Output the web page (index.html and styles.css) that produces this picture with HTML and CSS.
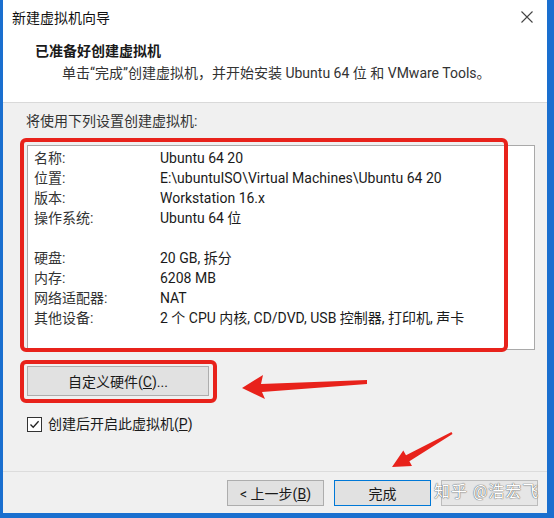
FILE: index.html
```html
<!DOCTYPE html>
<html lang="zh-CN">
<head>
    <meta charset="UTF-8">
    <title>新建虚拟机向导</title>
    <link rel="stylesheet" href="styles.css">
</head>
<body>
    <div class="window">
        <div class="header">
            <div class="titlebar">
                <span class="title">新建虚拟机向导</span>
                <span class="close">
                    <svg width="12" height="12" viewBox="0 0 12 12"><path d="M0.5 0.5 L11.5 11.5 M11.5 0.5 L0.5 11.5" stroke="#444" stroke-width="1.1" fill="none"/></svg>
                </span>
            </div>
            <div class="heading">已准备好创建虚拟机</div>
            <div class="subtitle">单击“完成”创建虚拟机，并开始安装 Ubuntu 64 位 和 VMware Tools。</div>
        </div>

        <div class="content">
            <div class="intro">将使用下列设置创建虚拟机:</div>
            <div class="listbox">
                <div class="row"><span class="key">名称:</span><span>Ubuntu 64 20</span></div>
                <div class="row"><span class="key">位置:</span><span>E:\ubuntuISO\Virtual Machines\Ubuntu 64 20</span></div>
                <div class="row"><span class="key">版本:</span><span>Workstation 16.x</span></div>
                <div class="row"><span class="key">操作系统:</span><span>Ubuntu 64 位</span></div>
                <div class="row blank"></div>
                <div class="row"><span class="key">硬盘:</span><span>20 GB, 拆分</span></div>
                <div class="row"><span class="key">内存:</span><span>6208 MB</span></div>
                <div class="row"><span class="key">网络适配器:</span><span>NAT</span></div>
                <div class="row"><span class="key">其他设备:</span><span>2 个 CPU 内核, CD/DVD, USB 控制器, 打印机, 声卡</span></div>
            </div>
            <button type="button" class="btn btn-custom">自定义硬件(<u>C</u>)...</button>
            <label class="check">
                <span class="box">
                    <svg width="11" height="11" viewBox="0 0 11 11"><path d="M1.5 5.5 L4.2 8.3 L9.6 2.2" stroke="#222" stroke-width="1.3" fill="none"/></svg>
                </span>
                <span>创建后开启此虚拟机(<u>P</u>)</span>
            </label>
        </div>

        <div class="footer">
            <button type="button" class="btn">&lt; 上一步(<u>B</u>)</button>
            <button type="button" class="btn btn-default">完成</button>
            <button type="button" class="btn btn-cancel"></button>
        </div>
    </div>

    <!-- annotations drawn over the screenshot -->
    <svg class="marks" width="554" height="518" viewBox="0 0 554 518">
        <rect x="22" y="140" width="484" height="210" rx="4" fill="none" stroke="#e8221b" stroke-width="4"/>
        <rect x="22" y="362" width="193" height="39" rx="4" fill="none" stroke="#e8221b" stroke-width="4"/>
        <polygon points="242,388 265,399 262,392 367,384 367,380 261,384 263,375" fill="#e8221b"/>
        <polygon points="392,467 412,466 409.4,461.3 452.5,433.9 451.5,432.1 406,455.2 403.3,450.4" fill="#e8221b"/>
    </svg>
    <div class="watermark">知乎 @浩宏飞</div>
</body>
</html>
```

FILE: styles.css
```css
body {
    margin: 0;
    width: 554px;
    height: 518px;
    background-color: #1a6fcf;
    font-family: Roboto, "Noto Sans CJK SC", sans-serif;
    font-size: 14px;
    color: #1a1a1a;
    position: relative;
    overflow: hidden;
}
.window {
    margin-left: 3px;
    width: 544px;
    height: 513px;
    background: #f0f0f0;
    display: flex;
    flex-direction: column;
}
.header {
    background: #fff;
    height: 102px;
    border-bottom: 1px solid #d9d9d9;
}
.titlebar {
    height: 34px;
    display: flex;
    align-items: center;
    padding-left: 9px;
}
.title {
    flex: 1;
    color: #111;
}
.close {
    width: 40px;
    display: flex;
    justify-content: center;
}
.heading {
    margin-top: 7px;
    padding-left: 32px;
    line-height: 20px;
    font-weight: bold;
}
.subtitle {
    margin-top: 2px;
    padding-left: 59px;
    line-height: 20px;
    color: #333;
}
.content {
    flex: 1;
    padding: 8px 0 0 23px;
}
.intro {
    line-height: 20px;
    color: #333;
}
.listbox {
    margin: 14px 0 0 1px;
    width: 506px;
    height: 201px;
    background: #fff;
    border: 1px solid #a9a9a9;
    padding-top: 2px;
    box-sizing: content-box;
}
.row {
    display: flex;
    height: 20px;
    line-height: 20px;
    padding-left: 6px;
}
.key {
    width: 126px;
    color: #333;
}
.btn {
    font-family: inherit;
    font-size: 14px;
    color: #1a1a1a;
    background: #e1e1e1;
    border: 1px solid #adadad;
    padding: 0;
    width: 97px;
    height: 26px;
}
.btn-custom {
    display: block;
    margin: 16px 0 0 1px;
    width: 182px;
    height: 30px;
}
.btn-default {
    border-color: #0078d7;
}
.btn-cancel {
    background: #e6e6e6;
    border-color: #bcbcbc;
}
.check {
    display: flex;
    align-items: center;
    gap: 6px;
    margin: 20px 0 0 1px;
    line-height: 16px;
}
.box {
    width: 13px;
    height: 13px;
    border: 1px solid #333;
    background: #fff;
    display: flex;
    align-items: center;
    justify-content: center;
}
.footer {
    height: 42px;
    border-top: 1px solid #dcdcdc;
    display: flex;
    justify-content: flex-end;
    align-items: flex-start;
    gap: 10px;
    padding: 8px 9px 0 0;
    box-sizing: border-box;
}
.marks {
    position: absolute;
    left: 0;
    top: 0;
    pointer-events: none;
}
.watermark {
    position: absolute;
    left: 434px;
    top: 482px;
    font-size: 16px;
    line-height: 20px;
    color: #fff;
    text-shadow: 0 0 1px #555, 0 0 1px #555;
    letter-spacing: 1px;
}
```
